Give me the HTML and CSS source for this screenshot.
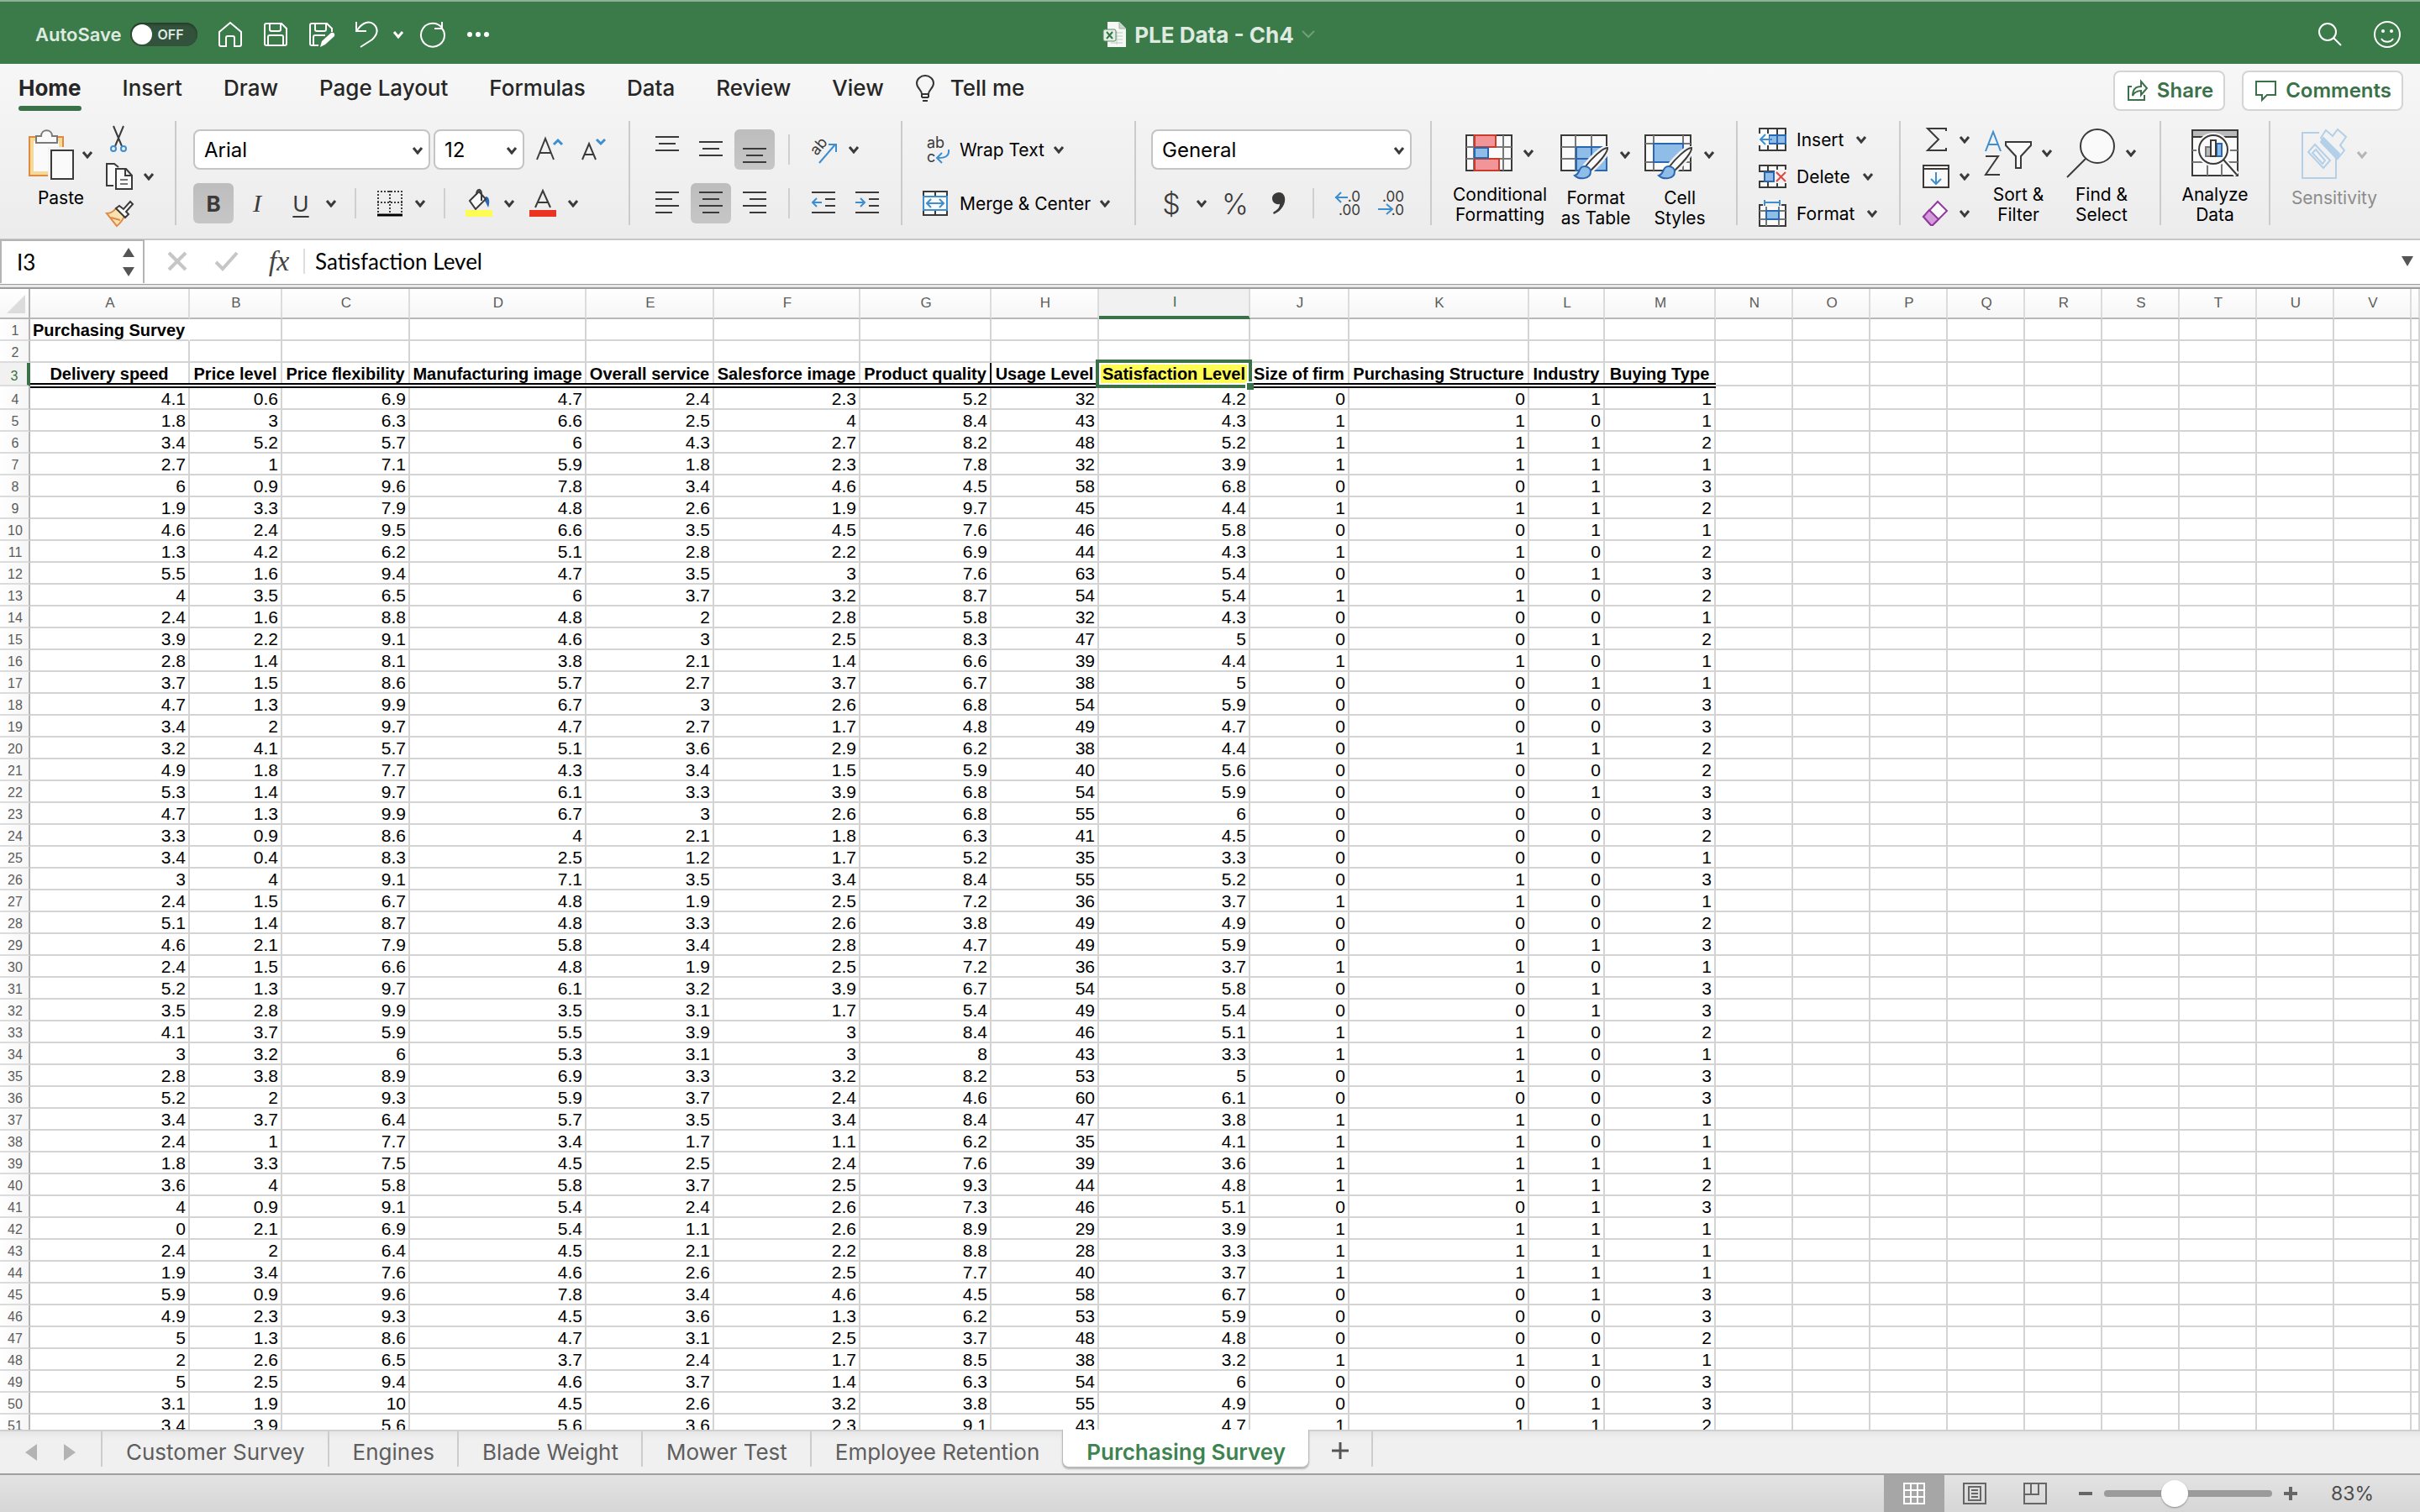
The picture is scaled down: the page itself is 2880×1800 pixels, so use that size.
FILE: index.html
```html
<!DOCTYPE html>
<html lang="en">
<head>
  <meta charset="UTF-8">
  <meta name="viewport" content="width=device-width,initial-scale=1">
  <title>PLE Data - Ch4</title>
  <link rel="stylesheet" href="styles.css">
</head>
<body>

<!-- shared icons -->
<svg class="defs" width="0" height="0">
  <symbol id="chev" viewBox="0 0 14 10"><path d="M2 2l5 6 5-6" fill="none" stroke="currentColor" stroke-width="3"/></symbol>
  <symbol id="brush" viewBox="0 0 46 40">
    <path d="M42 2C36 2 23 15 16 24l6 5C30 21 43 8 42 2z" fill="#fafafa" stroke="#f2f2f2" stroke-width="7"/>
    <path d="M42 2C36 2 23 15 16 24l6 5C30 21 43 8 42 2z" fill="#fafafa" stroke="#3b3a39" stroke-width="2"/>
    <path d="M15 24c-8 0-5 9-12 11 5 5 19 5 19-5 0-3-3-6-7-6z" fill="#90bce8" stroke="#2a67b1" stroke-width="2"/>
  </symbol>
</svg>

<header class="titlebar">
  <div class="quick">
    <label class="autosave">AutoSave
      <input type="checkbox">
      <span class="toggle"><span class="knob"></span>OFF</span>
    </label>
    <button title="Home"><svg width="30" height="32" viewBox="0 0 30 32"><path d="M2 13L15 2l13 11v15a2 2 0 0 1-2 2h-6V20a2 2 0 0 0-2-2h-6a2 2 0 0 0-2 2v10H4a2 2 0 0 1-2-2z"/></svg></button>
    <button title="Save"><svg width="30" height="32" viewBox="0 0 30 32"><path d="M4 3h18l6 6v18a2 2 0 0 1-2 2H4a2 2 0 0 1-2-2V5a2 2 0 0 1 2-2zM8 3v7a2 2 0 0 0 2 2h9a2 2 0 0 0 2-2V3M6 29V19a2 2 0 0 1 2-2h14a2 2 0 0 1 2 2v10"/></svg></button>
    <button title="Save As"><svg width="32" height="32" viewBox="0 0 32 32"><path d="M12 29H4a2 2 0 0 1-2-2V5a2 2 0 0 1 2-2h18l6 6v4M8 3v7a2 2 0 0 0 2 2h9a2 2 0 0 0 2-2V3M6 29V19a2 2 0 0 1 2-2h12"/><path d="M14 31l2-7 11-10c3-1 5 1 4 4L20 28z" fill="#fff" stroke="none"/></svg></button>
    <div class="pair">
      <button title="Undo"><svg width="30" height="34" viewBox="0 0 30 34"><path d="M3 2v11h12M4 12C10 3 18 0 24 5c6 6 4 12-2 18L8 32"/></svg></button>
      <button title="Undo list"><svg class="chev" width="14" height="10"><use href="#chev"/></svg></button>
    </div>
    <button title="Redo"><svg width="32" height="34" viewBox="0 0 32 34"><path d="M27 2v8h-9M27 9A14 14 0 1 0 30 18c0-3-1-6-3-8"/></svg></button>
    <button title="More"><svg width="28" height="8" viewBox="0 0 28 8"><g fill="#fff" stroke="none"><circle cx="4" cy="4" r="3"/><circle cx="14" cy="4" r="3"/><circle cx="24" cy="4" r="3"/></g></svg></button>
  </div>
  <div class="doc">
    <svg width="28" height="32" viewBox="0 0 28 32"><path d="M5 1h14l8 8v22H5z" fill="#f5f8f5"/><path d="M19 1v8h8" fill="#c9d6cc" stroke="#9db5a2"/><path d="M9 14h14M9 18h14M9 22h14M9 26h14M16 12v16" stroke="#b9cdbd" stroke-width="1"/><rect y="10" width="15" height="14" rx="2" fill="#e4eee6" stroke="#5d8a68"/><path d="M4 13l7 8M11 13l-7 8" stroke="#2f7a44" stroke-width="2"/></svg>
    <h1>PLE Data - Ch4</h1>
    <svg class="faint" width="16" height="12" viewBox="0 0 16 12"><path d="M1 2l7 7 7-7" fill="none" stroke="#6fa07a" stroke-width="2"/></svg>
  </div>
  <div class="right">
    <button title="Search"><svg width="30" height="32" viewBox="0 0 30 32"><circle cx="12" cy="13" r="10"/><path d="M19 20l9 9"/></svg></button>
    <button title="Feedback"><svg width="34" height="34" viewBox="0 0 34 34"><circle cx="17" cy="17" r="15"/><path d="M10 22c3 5 11 5 14 0"/><circle cx="12" cy="13" r="2" fill="#fff" stroke="none"/><circle cx="22" cy="13" r="2" fill="#fff" stroke="none"/></svg></button>
  </div>
</header>

<nav class="menu">
  <a class="on" href="#">Home</a>
  <a href="#">Insert</a>
  <a href="#">Draw</a>
  <a href="#">Page Layout</a>
  <a href="#">Formulas</a>
  <a href="#">Data</a>
  <a href="#">Review</a>
  <a href="#">View</a>
  <a class="tell" href="#"><svg width="24" height="32" viewBox="0 0 24 32" fill="none" stroke="#333" stroke-width="2"><path d="M8 23c0-5-6-7-6-13a10 9 0 0 1 20 0c0 6-6 8-6 13zM8 27h8M9 31h6M8 23v4M16 23v4"/></svg>Tell me</a>
  <div class="actions">
    <button><svg width="26" height="26" viewBox="0 0 26 26"><path d="M6 8H2v16h19v-6M7 19c0-8 4-11 10-11V2l7 8-7 8v-5c-5 0-8 2-10 6z"/></svg>Share</button>
    <button><svg width="26" height="26" viewBox="0 0 26 26"><path d="M1 2h23v16H14l-6 6v-6H1z"/></svg>Comments</button>
  </div>
</nav>

<div class="ribbon">
  <section class="group clipboard">
    <button class="big">
      <span class="pic"><svg width="56" height="60" viewBox="0 0 56 60"><path d="M1 9h40v46H1z" fill="#f6d997" stroke="#df8a43" stroke-width="2"/><path d="M6 14h30v36H6z" fill="#fafafa"/><path d="M9 8h6c0-9 13-9 13 0h6v8H9z" fill="#fafafa" stroke="#7a7a7a" stroke-width="2"/><path d="M23 21h32v40H23z" fill="#f2f2f2"/><path d="M27 25h26v34H27z" fill="#fafafa" stroke="#3b3a39" stroke-width="2"/></svg>
      <svg class="chev" width="14" height="10"><use href="#chev"/></svg></span>
      <span>Paste</span>
    </button>
    <div class="rows3">
      <button><svg width="32" height="34" viewBox="0 0 32 34" fill="none" stroke-width="2"><path d="M10 1l10 24M22 1L12 25" stroke="#3b3a39"/><circle cx="10" cy="28" r="3" stroke="#3e8ecf"/><circle cx="22" cy="28" r="3" stroke="#3e8ecf"/></svg></button>
      <button><svg width="34" height="34" viewBox="0 0 34 34" fill="#fafafa" stroke="#3b3a39" stroke-width="2"><path d="M10 28H2V2h9l5 4"/><path d="M13 8h12l7 8v16H13zM24 8v8h8"/><path d="M18 21h9M18 26h9" stroke="#777"/></svg> <svg class="chev" width="14" height="10"><use href="#chev"/></svg></button>
      <button><svg width="34" height="32" viewBox="0 0 34 32" stroke-width="2"><path d="M2 16c5 0 8-2 11-6l10 9c-2 5-5 9-9 12z" fill="#fae2b0" stroke="#df8a43"/><path d="M7 21l11 3" stroke="#df8a43"/><path d="M13 10l4-3 5 4 8-9 3 3-8 9 3 3-4 4z" fill="#fafafa" stroke="#3b3a39"/></svg></button>
    </div>
  </section>

  <section class="group font">
    <div class="row">
      <div class="pick face"><select aria-label="Font"><option>Arial</option></select><svg class="chev" width="14" height="10"><use href="#chev"/></svg></div>
      <div class="pick size"><select aria-label="Font size"><option>12</option></select><svg class="chev" width="14" height="10"><use href="#chev"/></svg></div>
      <button class="ib" title="Grow font"><svg width="32" height="32" viewBox="0 0 32 32" fill="none" stroke-width="2"><path d="M1 28L11 3l10 25M5 20h12" stroke="#3b3a39"/><path d="M21 10l5-5 5 5" stroke="#3e8ecf" stroke-width="3"/></svg></button>
      <button class="ib" title="Shrink font"><svg width="32" height="32" viewBox="0 0 32 32" fill="none" stroke-width="2"><path d="M3 28l8-19 8 19M6 22h10" stroke="#3b3a39"/><path d="M20 4l5 5 5-5" stroke="#3e8ecf" stroke-width="3"/></svg></button>
    </div>
    <div class="row">
      <button class="ib on"><b>B</b></button>
      <button class="ib"><i>I</i></button>
      <button class="ib"><u>U</u></button>
      <button class="cb"><svg class="chev" width="14" height="10"><use href="#chev"/></svg></button>
      <span class="bar"></span>
      <button class="ib"><svg width="30" height="32" viewBox="0 0 30 32" fill="none" stroke="#3b3a39" stroke-width="2"><path d="M0 2h30M1 1v28M29 1v28M15 1v28M0 15h30" stroke-dasharray="2 2"/><path d="M0 30h30" stroke="#000" stroke-width="3"/></svg></button>
      <button class="cb"><svg class="chev" width="14" height="10"><use href="#chev"/></svg></button>
      <span class="bar"></span>
      <button class="ib"><svg width="32" height="34" viewBox="0 0 32 34" fill="none" stroke-width="2"><path d="M24 9c5 0 5 8 3 13-2-4-3-7-5-9z" fill="#2a67b1"/><path d="M5 14L16 3l8 9-12 12z" fill="#fafafa" stroke="#3b3a39"/><path d="M13 7c0-8 6-8 6-1v8" stroke="#3b3a39"/><path d="M0 25h32v8H0z" fill="#fefb54"/></svg></button>
      <button class="cb"><svg class="chev" width="14" height="10"><use href="#chev"/></svg></button>
      <button class="ib next"><svg width="32" height="34" viewBox="0 0 32 34" fill="none"><path d="M7 22l9-20 9 20M10 16h12" stroke="#3b3a39" stroke-width="2"/><path d="M0 25h32v8H0z" fill="#ea3323"/></svg></button>
      <button class="cb"><svg class="chev" width="14" height="10"><use href="#chev"/></svg></button>
    </div>
  </section>

  <section class="group align">
    <div class="row">
      <button class="ib"><svg class="ln" viewBox="0 0 28 48"><path d="M0 9h28M4 17h20M0 25h28"/></svg></button>
      <button class="ib"><svg class="ln" viewBox="0 0 28 48"><path d="M0 15h28M4 23h20M0 31h28"/></svg></button>
      <button class="ib on"><svg class="ln" viewBox="0 0 28 48"><path d="M0 23h28M4 31h20M0 39h28"/></svg></button>
      <span class="bar"></span>
      <button class="ib"><svg width="34" height="34" viewBox="0 0 34 34"><text x="9" y="25" transform="rotate(-50 9 25)" class="ab">ab</text><path d="M12 33L31 11M23 11h9v9" fill="none" stroke="#3e8ecf" stroke-width="2"/></svg></button>
      <button class="cb"><svg class="chev" width="14" height="10"><use href="#chev"/></svg></button>
    </div>
    <div class="row">
      <button class="ib"><svg class="ln" viewBox="0 0 28 48"><path d="M0 11h28M0 19h20M0 27h28M0 35h20"/></svg></button>
      <button class="ib on"><svg class="ln" viewBox="0 0 28 48"><path d="M0 11h28M4 19h20M0 27h28M4 35h20"/></svg></button>
      <button class="ib"><svg class="ln" viewBox="0 0 28 48"><path d="M0 11h28M8 19h20M0 27h28M8 35h20"/></svg></button>
      <span class="bar"></span>
      <button class="ib"><svg class="ln" viewBox="0 0 28 48"><path d="M0 11h28M16 19h12M16 27h12M0 35h28"/><path d="M12 23H1M6 18l-5 5 5 5" stroke="#3e8ecf"/></svg></button>
      <button class="ib"><svg class="ln" viewBox="0 0 28 48"><path d="M0 11h28M16 19h12M16 27h12M0 35h28"/><path d="M0 23h11M6 18l5 5-5 5" stroke="#3e8ecf"/></svg></button>
    </div>
  </section>

  <section class="group wrap">
    <div class="row">
      <button class="tb"><svg width="34" height="34" viewBox="0 0 34 34"><text x="5" y="15" class="ab">ab</text><text x="5" y="32" class="ab">c</text><path d="M31 17c1 8-4 10-13 10M23 21l-6 6 6 6" fill="none" stroke="#3e8ecf" stroke-width="2"/></svg>Wrap Text<svg class="chev" width="14" height="10"><use href="#chev"/></svg></button>
    </div>
    <div class="row">
      <button class="tb"><svg width="34" height="32" viewBox="0 0 34 32" fill="#fafafa" stroke-width="2"><path d="M1 2h28v28H1zM15 2v28" stroke="#3b3a39"/><path d="M1 8h28v16H1zM6 16h18M10 11l-5 5 5 5M20 11l5 5-5 5" stroke="#3e8ecf"/></svg>Merge &amp; Center<svg class="chev" width="14" height="10"><use href="#chev"/></svg></button>
    </div>
  </section>

  <section class="group number">
    <div class="row">
      <div class="pick fmt"><select aria-label="Number format"><option>General</option></select><svg class="chev" width="14" height="10"><use href="#chev"/></svg></div>
    </div>
    <div class="row">
      <button class="ib sym">$</button>
      <button class="cb"><svg class="chev" width="14" height="10"><use href="#chev"/></svg></button>
      <button class="ib sym next">%</button>
      <button class="ib"><svg width="16" height="26" viewBox="0 0 16 26"><path d="M8 0c10 0 11 18-6 26l-1-2c5-3 8-6 8-10C3 15 0 11 0 7s4-7 8-7z" fill="#3b3a39"/></svg></button>
      <span class="bar"></span>
      <button class="ib"><svg width="32" height="34" viewBox="0 0 32 34"><text x="31" y="15" class="dec">.0</text><text x="31" y="31" class="dec">.00</text><path d="M16 10H1M8 4l-6 6 6 6" fill="none" stroke="#3e8ecf" stroke-width="2"/></svg></button>
      <button class="ib"><svg width="32" height="34" viewBox="0 0 32 34"><text x="31" y="15" class="dec">.00</text><text x="31" y="31" class="dec">.0</text><path d="M0 24h16M10 18l7 6-7 6" fill="none" stroke="#3e8ecf" stroke-width="2"/></svg></button>
    </div>
  </section>

  <section class="group styles">
    <button class="big">
      <span class="pic"><svg width="58" height="44" viewBox="0 0 58 44" fill="#fafafa" stroke-width="2"><path d="M1 1h54v42H1z" stroke="#3b3a39"/><path d="M1 15h54M1 29h54M10 1v42M45 1v42" stroke="#777"/><path d="M11 1h25v14H11zM11 29h29v14H11z" fill="#f29599" stroke="#cb3a2a"/><path d="M11 16h16v12H11z" fill="#90bce8" stroke="#2a67b1"/></svg>
      <svg class="chev" width="14" height="10"><use href="#chev"/></svg></span>
      <span>Conditional<br>Formatting</span>
    </button>
    <button class="big">
      <span class="pic"><svg width="60" height="64" viewBox="0 0 60 64" fill="#fafafa" stroke-width="2"><path d="M1 9h54v42H1z" stroke="#3b3a39"/><path d="M1 23h54M1 37h54M18 9v42M37 9v42" stroke="#777"/><path d="M19 23h36v28H19zM37 23v28M19 37h36" fill="#90bce8" stroke="#2a67b1"/><use href="#brush" x="14" y="22" width="46" height="40"/></svg>
      <svg class="chev" width="14" height="10"><use href="#chev"/></svg></span>
      <span>Format<br>as Table</span>
    </button>
    <button class="big">
      <span class="pic"><svg width="60" height="64" viewBox="0 0 60 64" fill="#fafafa" stroke-width="2"><path d="M1 9h54v42H1z" stroke="#3b3a39"/><path d="M1 19h54M1 41h54M11 9v42M46 9v42" stroke="#777"/><path d="M11 19h35v22H11z" fill="#90bce8" stroke="#2a67b1"/><use href="#brush" x="14" y="22" width="46" height="40"/></svg>
      <svg class="chev" width="14" height="10"><use href="#chev"/></svg></span>
      <span>Cell<br>Styles</span>
    </button>
  </section>

  <section class="group cells">
    <div class="rows3">
      <button><svg width="34" height="30" viewBox="0 0 34 30" fill="#fafafa" stroke-width="2"><path d="M1 2h31v26H1zM11 2v26M22 2v26" stroke="#3b3a39"/><path d="M12 10h20v10H12zM22 10v10" fill="#90bce8" stroke="#2a67b1"/><path d="M0 8h12v14H0z"/><path d="M16 15H2M8 9l-6 6 6 6" fill="none" stroke="#3e8ecf"/></svg>Insert<svg class="chev" width="14" height="10"><use href="#chev"/></svg></button>
      <button><svg width="34" height="30" viewBox="0 0 34 30" fill="#fafafa" stroke-width="2"><path d="M1 2h31v7H1zM1 21h31v7H1zM11 2v7M22 2v7M11 21v7M22 21v7" stroke="#3b3a39"/><path d="M7 10h11v11H7z" fill="#90bce8" stroke="#2a67b1"/><path d="M19 7h15v16H19z" fill="#f2f2f2"/><path d="M21 10l11 11M32 10L21 21" stroke="#e0443c"/></svg>Delete<svg class="chev" width="14" height="10"><use href="#chev"/></svg></button>
      <button><svg width="34" height="34" viewBox="0 0 34 34" fill="#fafafa" stroke-width="2"><path d="M1 7h31v25H1z" stroke="#3b3a39"/><path d="M1 14h31M1 24h31M9 7v25M24 7v25" stroke="#777"/><path d="M9 14h15v10H9z" fill="#90bce8" stroke="#2a67b1"/><path d="M5 0h22v9H5z" fill="#f2f2f2"/><path d="M7 1v7M25 1v7M7 4h18" stroke="#3e8ecf"/></svg>Format<svg class="chev" width="14" height="10"><use href="#chev"/></svg></button>
    </div>
  </section>

  <section class="group edit">
    <div class="rows3">
      <button><svg width="34" height="30" viewBox="0 0 34 30" fill="none" stroke="#3b3a39" stroke-width="2"><path d="M30 5V2H8l13 13L8 28h22v-3"/></svg><svg class="chev" width="14" height="10"><use href="#chev"/></svg></button>
      <button><svg width="34" height="30" viewBox="0 0 34 30" fill="#fafafa" stroke="#3b3a39" stroke-width="2"><path d="M3 2h30v26H3zM3 6h30"/><path d="M18 10v14M12 18l6 6 6-6" fill="none" stroke="#3e8ecf"/></svg><svg class="chev" width="14" height="10"><use href="#chev"/></svg></button>
      <button><svg width="34" height="32" viewBox="0 0 34 32" fill="#fafafa" stroke="#8f3a9c" stroke-width="2"><path d="M3 20L20 2l11 11-17 17H12z"/><path d="M3 20l7-8 11 11-7 7H12z" fill="#d59adb"/></svg><svg class="chev" width="14" height="10"><use href="#chev"/></svg></button>
    </div>
    <button class="big">
      <span class="pic"><svg width="58" height="58" viewBox="0 0 58 58" fill="none" stroke="#3b3a39" stroke-width="2"><path d="M2 27L11 4l9 23M5 19h12" stroke="#3e8ecf"/><path d="M2 33h15L2 55h17"/><path d="M26 16h30v4L44 33v14h-6V33L26 20z" fill="#fafafa"/></svg>
      <svg class="chev" width="14" height="10"><use href="#chev"/></svg></span>
      <span>Sort &amp;<br>Filter</span>
    </button>
    <button class="big">
      <span class="pic"><svg width="60" height="60" viewBox="0 0 60 60" fill="#fafafa" stroke="#3b3a39" stroke-width="2"><circle cx="37" cy="22" r="20"/><path d="M23 37L1 59"/></svg>
      <svg class="chev" width="14" height="10"><use href="#chev"/></svg></span>
      <span>Find &amp;<br>Select</span>
    </button>
  </section>

  <section class="group analyze">
    <button class="big">
      <span class="pic"><svg width="58" height="60" viewBox="0 0 58 60" fill="#fafafa" stroke="#3b3a39" stroke-width="2"><path d="M2 3h54v54H2z"/><path d="M3 4h52v6H3z" fill="#bbb" stroke="none"/><path d="M2 11h54"/><path d="M2 27h54M2 41h54M20 41v16M37 41v16" stroke="#777"/><circle cx="27" cy="26" r="20" stroke="none"/><path d="M38 38l17 18" stroke="#fafafa" stroke-width="7"/><circle cx="27" cy="26" r="17"/><path d="M39 38l16 18"/><path d="M18 23h6v11h-6z" fill="#bbb" stroke="#777"/><path d="M31 19h6v15h-6z" fill="#90bce8" stroke="#2a67b1"/><path d="M24 15h6v19h-6z"/></svg></span>
      <span>Analyze<br>Data</span>
    </button>
  </section>

  <section class="group sens">
    <button class="big" disabled>
      <span class="pic"><svg width="56" height="62" viewBox="0 0 56 62" fill="none" stroke="#b3d0e8" stroke-width="2"><path d="M22 5H2v54h40V34"/><path d="M17 19l18 19-8 9L9 28z" fill="#f2f2f2"/><path d="M18 25l11 13-3 4-12-13z"/><path d="M24 11l6-9 8 7 6-8 10 9-7 10 5 6-8 10z" fill="#f2f2f2"/><path d="M27 11l19 19-3 6-19-20z" fill="#b3d0e8"/></svg>
      <svg class="chev" width="14" height="10"><use href="#chev"/></svg></span>
      <span>Sensitivity</span>
    </button>
  </section>
</div>

<div class="formula">
  <div class="namebox">
    <input type="text" value="I3" aria-label="Name box">
    <svg width="14" height="34" viewBox="0 0 14 34"><path d="M0 11L7 0l7 11zM0 23l7 11 7-11z" fill="#555"/></svg>
  </div>
  <button title="Cancel"><svg width="24" height="24" viewBox="0 0 24 24"><path d="M2 2l20 20M22 2L2 22" stroke="#c6c6c6" stroke-width="4"/></svg></button>
  <button title="Enter"><svg width="30" height="24" viewBox="0 0 30 24"><path d="M2 13l8 8L27 2" fill="none" stroke="#c6c6c6" stroke-width="4"/></svg></button>
  <button class="fx" title="Insert function">fx</button>
  <input class="entry" type="text" value="Satisfaction Level" aria-label="Formula">
  <button title="Expand"><svg width="14" height="12" viewBox="0 0 14 12"><path d="M0 0h14L7 12z" fill="#555"/></svg></button>
</div>

<main class="sheet">
  <table>
    <colgroup id="cols"></colgroup>
    <thead><tr id="letters"></tr></thead>
    <tbody id="rows"></tbody>
  </table>
</main>

<nav class="tabs">
  <button class="arrow" title="Previous"><svg width="14" height="20" viewBox="0 0 14 20"><path d="M14 0v20L0 10z"/></svg></button>
  <button class="arrow" title="Next"><svg width="14" height="20" viewBox="0 0 14 20"><path d="M0 0v20l14-10z"/></svg></button>
  <a class="first" href="#">Customer Survey</a>
  <a href="#">Engines</a>
  <a href="#">Blade Weight</a>
  <a href="#">Mower Test</a>
  <a class="last" href="#">Employee Retention</a>
  <a class="on" href="#">Purchasing Survey</a>
  <button class="add" title="Add sheet"><svg width="20" height="20" viewBox="0 0 20 20"><path d="M10 0v20M0 10h20" stroke="#555" stroke-width="3"/></svg></button>
</nav>

<footer class="status">
  <button class="view on" title="Normal"><svg width="28" height="28" viewBox="0 0 28 28" fill="none" stroke="#fff" stroke-width="2"><path d="M2 2h24v24H2zM10 2v24M18 2v24M2 10h24M2 18h24"/></svg></button>
  <button class="view" title="Page layout"><svg width="28" height="28" viewBox="0 0 28 28" fill="none" stroke="#666" stroke-width="2"><path d="M1 2h26v24H1zM7 6h14v16H7zM10 10h8M10 14h8M10 18h8"/></svg></button>
  <button class="view" title="Page break"><svg width="28" height="28" viewBox="0 0 28 28" fill="none" stroke="#666" stroke-width="2"><path d="M1 2h26v24H1zM1 15h17V2M9 2v13"/></svg></button>
  <button class="zb" title="Zoom out"><svg width="16" height="16" viewBox="0 0 16 16"><path d="M0 8h16" stroke="#666" stroke-width="4"/></svg></button>
  <input type="range" min="10" max="190" value="83" aria-label="Zoom">
  <button class="zb" title="Zoom in"><svg width="16" height="16" viewBox="0 0 16 16"><path d="M0 8h16M8 0v16" stroke="#666" stroke-width="4"/></svg></button>
  <span class="pct">83%</span>
</footer>

<script>
  const widths = [36, 190, 110, 152, 210, 152, 174, 156, 128, 180, 118, 214, 90, 132, 92, 92, 92, 92, 92, 92, 92, 92, 92];
  const letters = "ABCDEFGHIJKLMNOPQRSTUVW";
  const titles = ["Delivery speed", "Price level", "Price flexibility", "Manufacturing image", "Overall service",
    "Salesforce image", "Product quality", "Usage Level", "Satisfaction Level", "Size of firm",
    "Purchasing Structure", "Industry", "Buying Type"];

  // one line per respondent, starts at row 4
  const survey = `4.1 0.6 6.9 4.7 2.4 2.3 5.2 32 4.2 0 0 1 1
1.8 3 6.3 6.6 2.5 4 8.4 43 4.3 1 1 0 1
3.4 5.2 5.7 6 4.3 2.7 8.2 48 5.2 1 1 1 2
2.7 1 7.1 5.9 1.8 2.3 7.8 32 3.9 1 1 1 1
6 0.9 9.6 7.8 3.4 4.6 4.5 58 6.8 0 0 1 3
1.9 3.3 7.9 4.8 2.6 1.9 9.7 45 4.4 1 1 1 2
4.6 2.4 9.5 6.6 3.5 4.5 7.6 46 5.8 0 0 1 1
1.3 4.2 6.2 5.1 2.8 2.2 6.9 44 4.3 1 1 0 2
5.5 1.6 9.4 4.7 3.5 3 7.6 63 5.4 0 0 1 3
4 3.5 6.5 6 3.7 3.2 8.7 54 5.4 1 1 0 2
2.4 1.6 8.8 4.8 2 2.8 5.8 32 4.3 0 0 0 1
3.9 2.2 9.1 4.6 3 2.5 8.3 47 5 0 0 1 2
2.8 1.4 8.1 3.8 2.1 1.4 6.6 39 4.4 1 1 0 1
3.7 1.5 8.6 5.7 2.7 3.7 6.7 38 5 0 0 1 1
4.7 1.3 9.9 6.7 3 2.6 6.8 54 5.9 0 0 0 3
3.4 2 9.7 4.7 2.7 1.7 4.8 49 4.7 0 0 0 3
3.2 4.1 5.7 5.1 3.6 2.9 6.2 38 4.4 0 1 1 2
4.9 1.8 7.7 4.3 3.4 1.5 5.9 40 5.6 0 0 0 2
5.3 1.4 9.7 6.1 3.3 3.9 6.8 54 5.9 0 0 1 3
4.7 1.3 9.9 6.7 3 2.6 6.8 55 6 0 0 0 3
3.3 0.9 8.6 4 2.1 1.8 6.3 41 4.5 0 0 0 2
3.4 0.4 8.3 2.5 1.2 1.7 5.2 35 3.3 0 0 0 1
3 4 9.1 7.1 3.5 3.4 8.4 55 5.2 0 1 0 3
2.4 1.5 6.7 4.8 1.9 2.5 7.2 36 3.7 1 1 0 1
5.1 1.4 8.7 4.8 3.3 2.6 3.8 49 4.9 0 0 0 2
4.6 2.1 7.9 5.8 3.4 2.8 4.7 49 5.9 0 0 1 3
2.4 1.5 6.6 4.8 1.9 2.5 7.2 36 3.7 1 1 0 1
5.2 1.3 9.7 6.1 3.2 3.9 6.7 54 5.8 0 0 1 3
3.5 2.8 9.9 3.5 3.1 1.7 5.4 49 5.4 0 0 1 3
4.1 3.7 5.9 5.5 3.9 3 8.4 46 5.1 1 1 0 2
3 3.2 6 5.3 3.1 3 8 43 3.3 1 1 0 1
2.8 3.8 8.9 6.9 3.3 3.2 8.2 53 5 0 1 0 3
5.2 2 9.3 5.9 3.7 2.4 4.6 60 6.1 0 0 0 3
3.4 3.7 6.4 5.7 3.5 3.4 8.4 47 3.8 1 1 0 1
2.4 1 7.7 3.4 1.7 1.1 6.2 35 4.1 1 1 0 1
1.8 3.3 7.5 4.5 2.5 2.4 7.6 39 3.6 1 1 1 1
3.6 4 5.8 5.8 3.7 2.5 9.3 44 4.8 1 1 1 2
4 0.9 9.1 5.4 2.4 2.6 7.3 46 5.1 0 0 1 3
0 2.1 6.9 5.4 1.1 2.6 8.9 29 3.9 1 1 1 1
2.4 2 6.4 4.5 2.1 2.2 8.8 28 3.3 1 1 1 1
1.9 3.4 7.6 4.6 2.6 2.5 7.7 40 3.7 1 1 1 1
5.9 0.9 9.6 7.8 3.4 4.6 4.5 58 6.7 0 0 1 3
4.9 2.3 9.3 4.5 3.6 1.3 6.2 53 5.9 0 0 0 3
5 1.3 8.6 4.7 3.1 2.5 3.7 48 4.8 0 0 0 2
2 2.6 6.5 3.7 2.4 1.7 8.5 38 3.2 1 1 1 1
5 2.5 9.4 4.6 3.7 1.4 6.3 54 6 0 0 0 3
3.1 1.9 10 4.5 2.6 3.2 3.8 55 4.9 0 0 1 3
3.4 3.9 5.6 5.6 3.6 2.3 9.1 43 4.7 1 1 1 2`.split("\n").map(line => line.split(" "));

  function cell(tag, text, cls) {
    return `<${tag}${cls ? ` class="${cls}"` : ""}>${text || ""}</${tag}>`;
  }

  function row(n, values, tag, clsFor) {
    let html = cell("th", n, n === 3 ? "num on" : "num");
    for (let i = 0; i < letters.length; i++) {
      const filled = values[i] !== undefined;
      html += cell(filled ? tag : "td", values[i], filled && clsFor ? clsFor(i) : "");
    }
    return `<tr${n === 4 ? ' class="tall"' : ""}>${html}</tr>`;
  }

  document.getElementById("cols").innerHTML = widths.map(w => `<col style="width:${w}px">`).join("");
  document.getElementById("letters").innerHTML =
    `<th class="corner"><svg width="22" height="22" viewBox="0 0 22 22"><path d="M22 0v22H0z" fill="#dcdcdc"/></svg></th>` +
    [...letters].map(l => cell("th", l === "W" ? "" : l, l === "I" ? "on" : "")).join("");

  let html = row(1, ["Purchasing Survey"], "td", () => "name");
  html += row(2, [], "td");
  html += row(3, titles, "th", i => "title" + (i === 6 ? " ruled" : "") + (i === 8 ? " selected" : ""));
  survey.forEach((values, i) => html += row(i + 4, values, "td"));
  document.getElementById("rows").innerHTML = html;
</script>

</body>
</html>
```
FILE: styles.css
```css
*, *::before, *::after {
  box-sizing: border-box;
}

body {
  margin: 0;
  height: 100vh;
  display: flex;
  flex-direction: column;
  overflow: hidden;
  font-family: Inter, "Liberation Sans", sans-serif;
  font-size: 21px;
  color: #000;
  background: #f2f2f2;
}

button, select, input {
  font: inherit;
  color: inherit;
}

button {
  display: flex;
  align-items: center;
  justify-content: center;
  padding: 0;
  border: none;
  background: none;
}

a {
  color: inherit;
  text-decoration: none;
}

svg {
  display: block;
  flex: none;
  overflow: visible;
}

.defs {
  position: absolute;
}

.chev {
  color: #3b3a39;
}

/* title bar */
.titlebar {
  height: 76px;
  flex: none;
  display: grid;
  grid-template-columns: 1fr auto 1fr;
  align-items: center;
  padding: 4px 22px 0 42px;
  border-top: 2px solid #8fb096;
  background: #3b7a49;
  color: #dfeae1;
}

.titlebar button svg {
  fill: none;
  stroke: #fff;
  stroke-width: 2;
}

.quick, .right {
  display: flex;
  align-items: center;
  gap: 24px;
}

.right {
  justify-content: flex-end;
  gap: 36px;
}

.autosave {
  display: flex;
  align-items: center;
  gap: 10px;
  font-size: 22px;
  font-weight: 600;
}

.autosave input {
  position: absolute;
  opacity: 0;
}

.toggle {
  display: flex;
  align-items: center;
  gap: 7px;
  width: 80px;
  height: 28px;
  padding: 2px;
  border-radius: 14px;
  background: #33523b;
  box-shadow: inset 0 2px 3px #243b2a;
  font-size: 16px;
}

.knob {
  width: 24px;
  height: 24px;
  border-radius: 50%;
  background: #fff;
}

.pair {
  display: flex;
  gap: 16px;
  margin: 0 -6px 0 -2px;
}

.quick .chev {
  color: #fff;
}

.doc {
  display: flex;
  align-items: center;
  gap: 9px;
  margin-right: 22px;
}

.doc h1 {
  margin: 0;
  font-size: 26px;
  font-weight: 700;
}

/* menu */
.menu {
  height: 68px;
  flex: none;
  display: flex;
  align-items: flex-start;
  gap: 49px;
  padding: 8px 20px 0 22px;
  background: linear-gradient(#f7f7f7, #f3f3f3);
  font-size: 26px;
  font-weight: 500;
  line-height: 42px;
  color: #262626;
}

.menu a.on {
  font-weight: 700;
}

.menu a.on::after {
  content: "";
  display: block;
  height: 6px;
  border-radius: 3px;
  background: #3a7148;
}

.tell {
  display: flex;
  align-items: center;
  gap: 18px;
  margin-left: -12px;
}

.actions {
  display: flex;
  gap: 20px;
  margin-left: auto;
}

.actions button {
  height: 48px;
  padding: 0 12px 0 14px;
  gap: 10px;
  border: 2px solid #d4d4d4;
  border-radius: 8px;
  background: #fff;
  color: #3a7148;
  font-size: 24px;
  font-weight: 600;
}

.actions svg {
  fill: none;
  stroke: #3a7148;
  stroke-width: 2;
}

/* ribbon */
.ribbon {
  height: 142px;
  flex: none;
  display: flex;
  border-bottom: 2px solid #c6c6c6;
  background: linear-gradient(#f3f3f3, #ececec);
}

.group {
  height: 124px;
  flex: none;
  border-right: 2px solid #cbcbcb;
}

.clipboard, .styles, .edit, .analyze, .sens {
  display: flex;
}

.clipboard {
  width: 210px;
  padding-left: 34px;
  gap: 14px;
}

.clipboard .pic {
  gap: 7px;
}

.font {
  width: 540px;
  padding: 10px 0 0 20px;
}

.align {
  width: 324px;
  padding: 10px 0 0 20px;
}

.wrap {
  width: 278px;
  padding: 10px 0 0 24px;
}

.number {
  width: 352px;
  padding: 10px 0 0 18px;
}

.styles {
  width: 364px;
  padding-left: 25px;
  gap: 16px;
}

.cells {
  width: 194px;
  padding-left: 25px;
}

.cells .chev {
  margin-left: 3px;
}

.edit {
  width: 310px;
  padding-left: 24px;
  gap: 16px;
}

.analyze {
  width: 130px;
  justify-content: center;
}

.sens {
  flex: 1;
  justify-content: center;
  padding-right: 26px;
  border: none;
}

.row {
  display: flex;
  align-items: center;
  height: 48px;
  margin-bottom: 16px;
}

.ib {
  width: 48px;
  height: 48px;
  border-radius: 6px;
  font-size: 26px;
  color: #3b3a39;
}

.ib + .ib, .next {
  margin-left: 4px;
}

.ib.on {
  background: linear-gradient(#bdbdbd, #c6c6c6);
}

.ib i {
  font-family: "Liberation Serif", serif;
  font-size: 30px;
}

.ib u {
  text-underline-offset: 5px;
}

.sym {
  font-size: 34px;
  font-weight: 300;
}

.cb {
  width: 24px;
  height: 48px;
}

.bar {
  width: 2px;
  height: 36px;
  margin: 0 16px;
  background: #cfcfcf;
}

.ln {
  width: 28px;
  height: 48px;
  fill: none;
  stroke: #3b3a39;
  stroke-width: 2;
}

.ab {
  font-size: 18px;
  fill: #3b3a39;
}

.dec {
  font-size: 17px;
  text-anchor: end;
  fill: #3b3a39;
}

.pick {
  position: relative;
  height: 48px;
}

.pick select {
  width: 100%;
  height: 48px;
  padding: 0 11px;
  border: 2px solid #c4c4c4;
  border-radius: 8px;
  background: #fff;
  appearance: none;
  font-size: 24px;
}

.pick .chev {
  position: absolute;
  right: 8px;
  top: 20px;
  pointer-events: none;
}

.face {
  width: 282px;
}

.size {
  width: 108px;
  margin: 0 6px 0 4px;
}

.fmt {
  width: 310px;
}

.tb {
  gap: 10px;
}

.big {
  display: flex;
  flex-direction: column;
  justify-content: flex-start;
  padding-top: 8px;
  line-height: 24px;
}

.big:disabled {
  color: #8c8c8c;
}

.big:disabled .chev {
  color: #b5b5b5;
}

.pic {
  display: flex;
  align-items: center;
  gap: 10px;
  height: 64px;
  margin-bottom: 8px;
}

.rows3 button {
  height: 44px;
  gap: 11px;
}

/* formula bar */
.formula {
  height: 58px;
  flex: none;
  display: flex;
  align-items: center;
  padding: 0 8px 6px 0;
  border-bottom: 2px solid #9c9c9c;
  background: linear-gradient(#fff 52px, #9c9c9c 52px, #9c9c9c 53px, #e8e8e8 53px);
  font-family: Lato, "Liberation Sans", sans-serif;
  font-size: 26px;
}

.formula input {
  border: none;
  outline: none;
  background: none;
}

.namebox {
  display: flex;
  align-items: center;
  width: 172px;
  height: 52px;
  padding: 0 10px 0 18px;
  margin-right: 27px;
  border: 2px solid #b4b4b4;
  border-bottom: none;
}

.namebox input {
  width: 100%;
  padding: 0;
}

.formula button {
  margin-right: 32px;
}

.formula .fx {
  width: 30px;
  margin-right: 14px;
  font-family: "Liberation Serif", serif;
  font-style: italic;
  font-size: 34px;
  color: #444;
}

.formula .entry {
  flex: 1;
  height: 30px;
  padding: 0 0 0 12px;
  border-left: 2px solid #dedede;
}

.formula .entry + button {
  margin: 0;
}

/* sheet */
.sheet {
  flex: 1;
  min-height: 0;
  overflow: hidden;
  background: #fff;
  font-family: "Liberation Sans", Arial, sans-serif;
}

table {
  width: 2134px;
  min-width: 100%;
  table-layout: fixed;
  border-collapse: separate;
  border-spacing: 0;
}

td {
  height: 26px;
  padding: 2px 3px 0;
  border-right: 2px solid #d4d4d4;
  border-bottom: 2px solid #d4d4d4;
  font-size: 21px;
  line-height: 22px;
  text-align: right;
  vertical-align: bottom;
  white-space: nowrap;
}

/* room for the lower half of the double rule */
.tall td {
  height: 28px;
}

thead th {
  height: 36px;
  padding: 0 0 0 2px;
  border-right: 2px solid #dcdcdc;
  border-bottom: 2px solid #b8b8b8;
  background: linear-gradient(#fff, #f6f6f6);
  font-size: 17px;
  font-weight: 400;
  color: #5c5c5c;
}

thead th.on {
  border-bottom: 4px solid #3a7148;
  background: #f1f1f1;
  color: #3a7148;
}

.corner svg {
  margin: 2px 0 0 6px;
}

thead th.corner {
  border-right-color: #b4b4b4;
}

.num {
  padding: 4px 0 0 2px;
  border-right: 2px solid #b4b4b4;
  border-bottom: 2px solid #dcdcdc;
  background: linear-gradient(90deg, #fff, #f6f6f6);
  font-size: 16px;
  font-weight: 400;
  line-height: 20px;
  vertical-align: bottom;
  color: #5c5c5c;
}

.num.on {
  border-right: 4px solid #3a7148;
  background: #f1f1f1;
  color: #3a7148;
}

td.name {
  border-right-color: #fff;
  font-size: 20px;
  font-weight: 700;
  text-align: left;
}

.title {
  position: relative;
  height: 28px;
  padding: 2px 0;
  border-right: 2px solid #d4d4d4;
  border-bottom: 2px solid #fff;
  font-size: 20px;
  line-height: 22px;
  white-space: nowrap;
}

/* double rule under the headings */
.title::after {
  content: "";
  position: absolute;
  left: 0;
  right: -2px;
  bottom: -4px;
  height: 6px;
  border: solid #000;
  border-width: 2px 0;
  background: #fff;
}

.ruled {
  border-right-color: #000;
}

.selected {
  background: #fefb54;
}

.title.selected::after {
  inset: -4px;
  height: auto;
  border: 4px solid #3a7148;
  background: none;
  box-shadow: inset 0 0 0 2px #fff;
  z-index: 1;
}

/* fill handle */
.selected::before {
  content: "";
  position: absolute;
  right: -6px;
  bottom: -6px;
  width: 10px;
  height: 10px;
  border: solid #fff;
  border-width: 2px 0 0 2px;
  background: #3a7148;
  z-index: 2;
}

/* sheet tabs */
.tabs {
  height: 54px;
  flex: none;
  display: flex;
  border-top: 2px solid #cfcfcf;
  border-bottom: 2px solid #a0a0a0;
  background: linear-gradient(#e6e6e6, #f0f0f0 10px);
  font-size: 26px;
  color: #5e5e5e;
  position: relative;
}

.arrow {
  height: 50px;
  margin-left: 30px;
  fill: #b3b3b3;
}

.arrow + .arrow {
  margin: 0 30px 0 32px;
}

.tabs a {
  height: 42px;
  padding: 4px 27px 0 28px;
  border-right: 2px solid #cccccc;
  line-height: 42px;
}

.tabs .first {
  border-left: 2px solid #cccccc;
}

.tabs .last {
  border-right: none;
}

.tabs .on {
  height: 45px;
  margin-top: -2px;
  padding-top: 6px;
  border: 1px solid #b9b9b9;
  border-top: none;
  border-radius: 0 0 8px 8px;
  background: #fff;
  box-shadow: 0 2px 2px #b5b5b5;
  color: #3e8350;
  font-weight: 600;
}

.add {
  width: 76px;
  height: 42px;
  padding-top: 4px;
  border-right: 2px solid #cccccc;
}

/* status bar */
.status {
  height: 44px;
  flex: none;
  display: flex;
  align-items: center;
  justify-content: flex-end;
  padding-right: 54px;
  background: linear-gradient(#e3e3e3, #d6d6d6);
  color: #4c4c4c;
}

.view {
  width: 72px;
  height: 44px;
}

.view.on {
  background: #a6a6a6;
}

.zb {
  width: 16px;
  margin: 0 14px;
}

.view + .zb {
  margin-left: 16px;
}

input[type="range"] {
  width: 200px;
  height: 32px;
  margin: 0;
  appearance: none;
  background: none;
}

input[type="range"]::-webkit-slider-runnable-track {
  height: 8px;
  border-radius: 4px;
  background: #9b9b9b;
}

input[type="range"]::-webkit-slider-thumb {
  appearance: none;
  width: 32px;
  height: 32px;
  margin-top: -12px;
  border-radius: 50%;
  background: #fff;
  box-shadow: 0 1px 2px #888;
}

.pct {
  width: 52px;
  margin-left: 26px;
  font-size: 23px;
}
```
